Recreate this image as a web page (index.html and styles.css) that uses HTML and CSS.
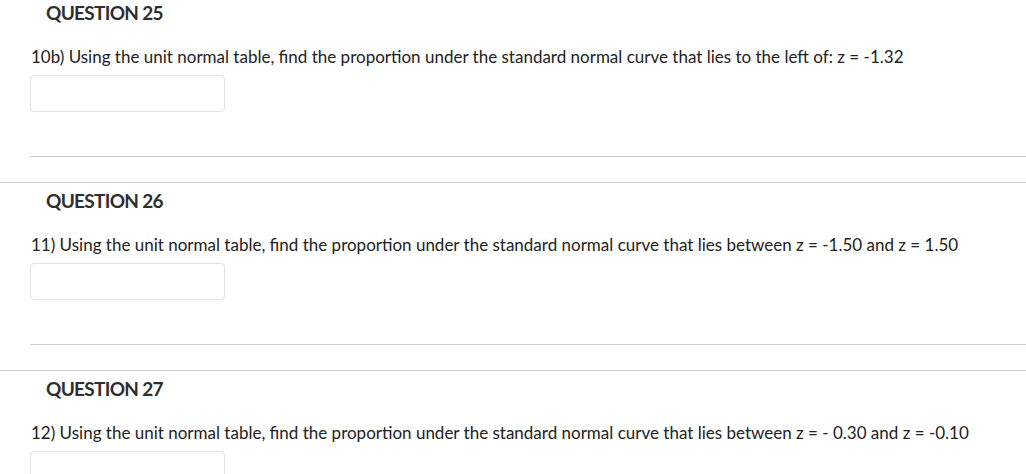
FILE: index.html
```html
<!DOCTYPE html>
<html>
<head>
<meta charset="utf-8">
<link rel="stylesheet" href="styles.css">
</head>
<body>
<div class="page">
  <section class="question">
    <h2 class="q-title">QUESTION 25</h2>
    <p class="q-text">10b) Using the unit normal table, find the proportion under the standard normal curve that lies to the left of: z = -1.32</p>
    <input class="q-input" type="text">
    <div class="q-sep"></div>
  </section>
  <section class="question">
    <h2 class="q-title">QUESTION 26</h2>
    <p class="q-text">11) Using the unit normal table, find the proportion under the standard normal curve that lies between z = -1.50 and z = 1.50</p>
    <input class="q-input" type="text">
    <div class="q-sep"></div>
  </section>
  <section class="question">
    <h2 class="q-title">QUESTION 27</h2>
    <p class="q-text">12) Using the unit normal table, find the proportion under the standard normal curve that lies between z = - 0.30 and z = -0.10</p>
    <input class="q-input" type="text">
    <div class="q-sep"></div>
  </section>
</div>
</body>
</html>
```
FILE: styles.css
```css
html, body {
  margin: 0;
  padding: 0;
  background: #fff;
  overflow: hidden;
}
.page {
  margin-top: -6px;
  font-family: Lato, "Open Sans", sans-serif;
  color: #222;
}
.question {
  border-top: 1px solid #cccccc;
  padding-top: 3px;
  display: flex;
  flex-direction: column;
  align-items: flex-start;
}
.q-title {
  margin: 0 0 0 46px;
  height: 30px;
  line-height: 30px;
  font-size: 19px;
  letter-spacing: -0.7px;
  font-weight: 700;
  color: #2f2f2f;
}
.q-text {
  margin: 19px 0 0 31px;
  font-size: 17px;
  line-height: 20px;
  color: #222;
  white-space: nowrap;
}
.q-input {
  margin: 8px 0 0 30px;
  width: 195px;
  height: 37px;
  box-sizing: border-box;
  border: 1px solid #e2e2e2;
  border-radius: 4px;
  background: #fff;
  padding: 0;
}
.q-sep {
  align-self: stretch;
  margin: 44px 0 0 30px;
  border-top: 1px solid #cccccc;
  height: 25px;
}
```
